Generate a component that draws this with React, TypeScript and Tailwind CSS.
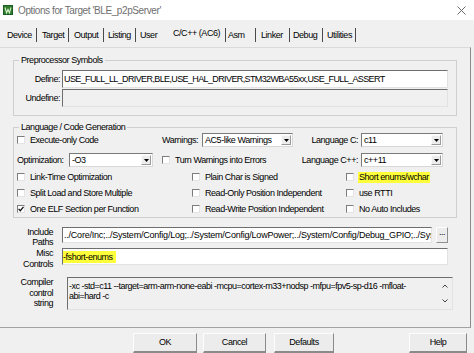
import React from "react";

function Check({ checked }: { checked?: boolean }) {
  return (
    <span className="flex h-[8px] w-[8px] shrink-0 items-center justify-center border border-t-[#7d7d7d] border-l-[#7d7d7d] border-r-[#e4e4e4] border-b-[#e4e4e4] bg-white">
      {checked && (
        <svg width="6" height="6" viewBox="0 0 6 6">
          <path d="M0.6 2.9 L2.3 4.7 L5.5 0.9" fill="none" stroke="#111" strokeWidth="1.3" />
        </svg>
      )}
    </span>
  );
}

function CheckRow({ label, checked, hl }: { label: string; checked?: boolean; hl?: boolean }) {
  return (
    <div className="flex h-[16px] items-center gap-[5px]">
      <Check checked={checked} />
      <span className={hl ? "whitespace-nowrap bg-[#ffff3a] px-[1px] -ml-[1px]" : "whitespace-nowrap"}>{label}</span>
    </div>
  );
}

function Select({ value, cls }: { value: string; cls: string }) {
  return (
    <div className={`flex items-stretch border border-t-[#7a7a7a] border-l-[#7a7a7a] border-r-[#d8d8d8] border-b-[#d8d8d8] bg-white ${cls}`}>
      <span className="flex flex-1 items-center overflow-hidden whitespace-nowrap pl-[2px]">{value}</span>
      <span className="my-[1px] mr-[1px] flex w-[10px] items-center justify-center border border-t-[#fafafa] border-l-[#fafafa] border-r-[#9a9a9a] border-b-[#9a9a9a] bg-[#ececec]">
        <svg width="5" height="3" viewBox="0 0 5 3">
          <path d="M0 0 H5 L2.5 3 Z" fill="#000" />
        </svg>
      </span>
    </div>
  );
}

const tabs = [
  { label: "Device", cls: "ml-[7px] w-[29px]", sep: true },
  { label: "Target", cls: "ml-[5px] w-[26px]", sep: true },
  { label: "Output", cls: "ml-[5px] w-[29px]", sep: true },
  { label: "Listing", cls: "ml-[4px] w-[27px]", sep: true },
  { label: "User", cls: "ml-[4px] w-[33px]", sep: false },
  { label: "C/C++ (AC6)", cls: "ml-0 w-[52px] pb-[4px]", sep: true },
  { label: "Asm", cls: "ml-[2px] w-[27px]", sep: true },
  { label: "Linker", cls: "ml-[5px] w-[28px]", sep: true },
  { label: "Debug", cls: "ml-[3px] w-[29px]", sep: true },
  { label: "Utilities", cls: "ml-[4px] w-[28px]", sep: true },
];

const sunken =
  "border border-t-[#6e6e6e] border-l-[#6e6e6e] border-r-[#e2e2e2] border-b-[#e2e2e2]";

const btn =
  "flex h-[20px] items-center justify-center border border-t-[#fdfdfd] border-l-[#fdfdfd] border-r-[#8a8a8a] border-b-[2px] border-b-[#8a8a8a] bg-[#ececec]";

export default function App() {
  return (
    <div className="h-[353px] w-[474px] overflow-hidden bg-[#f0f0f0] font-['Liberation_Sans',Arial,sans-serif] text-[9px] leading-[11px] tracking-[-0.45px] text-black">
      {/* Title bar */}
      <div className="flex h-[20px] items-center bg-white">
        <svg className="ml-[3px]" width="10" height="10" viewBox="0 0 10 10">
          <rect x="0" y="0" width="10" height="10" fill="#2f7d32" />
          <rect x="0.5" y="0.5" width="9" height="9" fill="none" stroke="#1b5e20" />
          <path d="M2 2.5 L3.6 7.8 L5 4.5 L6.4 7.8 L8 2.5" fill="none" stroke="#d7f0c8" strokeWidth="1.1" />
        </svg>
        <span className="ml-[5px] text-[10px] tracking-[-0.4px] text-[#6f6f6f]">Options for Target 'BLE_p2pServer'</span>
        <svg className="ml-auto mr-[8px]" width="9" height="9" viewBox="0 0 9 9">
          <path d="M0.5 0.5 L8.5 8.5 M8.5 0.5 L0.5 8.5" stroke="#6a6a6a" strokeWidth="1" />
        </svg>
      </div>

      {/* Tabs */}
      <div className="flex h-[27px] items-center pt-[3px]">
        {tabs.map((t) => (
          <React.Fragment key={t.label}>
            <span className={`whitespace-nowrap ${t.cls}`}>{t.label}</span>
            {t.sep && <span className="h-[14px] w-[1px] bg-[#4a4a4a]" />}
          </React.Fragment>
        ))}
      </div>

      {/* Pane */}
      <div className="flex h-[281px] w-[471px] flex-col border-t border-b border-r border-t-[#dadada] border-b-[#a3a3a3] border-r-[#8c8c8c]">
        <fieldset className="ml-[13px] mt-[6px] w-[444px] border border-[#cfcfcf] pb-[8px]">
          <legend className="ml-[5px] px-[2px] leading-[12px]">Preprocessor Symbols</legend>
          <div className="mt-[4px] flex h-[18px] items-center">
            <span className="w-[46px] text-right">Define:</span>
            <div className={`ml-[2px] flex h-[18px] w-[386px] items-center overflow-hidden whitespace-nowrap bg-white pl-[1px] tracking-[-0.62px] ${sunken}`}>
              USE_FULL_LL_DRIVER,BLE,USE_HAL_DRIVER,STM32WBA55xx,USE_FULL_ASSERT
            </div>
          </div>
          <div className="mt-[1px] flex h-[18px] items-center">
            <span className="w-[46px] text-right">Undefine:</span>
            <div className={`ml-[2px] h-[18px] w-[386px] bg-[#f0f0f0] ${sunken}`} />
          </div>
        </fieldset>

        <fieldset className="ml-[13px] mt-[5px] w-[444px] border border-[#cfcfcf]">
          <legend className="ml-[5px] px-[2px] leading-[12px]">Language / Code Generation</legend>
          <div className="flex h-[14px] items-center">
            <div className="ml-[3px] flex w-[145px] items-center gap-[5px]">
              <Check />
              <span className="whitespace-nowrap">Execute-only Code</span>
            </div>
            <div className="flex w-[134px] items-center">
              <span className="w-[40px] whitespace-nowrap">Warnings:</span>
              <Select value="AC5-like Warnings" cls="h-[14px] w-[91px]" />
            </div>
            <div className="flex items-center">
              <span className="w-[62px] whitespace-nowrap text-right">Language C:</span>
              <Select value="c11" cls="ml-[3px] h-[14px] w-[82px]" />
            </div>
          </div>
          <div className="mt-[6px] flex h-[14px] items-center">
            <div className="ml-[3px] flex w-[145px] items-center">
              <span className="w-[52px] whitespace-nowrap">Optimization:</span>
              <Select value="-O3" cls="h-[14px] w-[84px]" />
            </div>
            <div className="flex w-[134px] items-center gap-[5px]">
              <Check />
              <span className="whitespace-nowrap">Turn Warnings into Errors</span>
            </div>
            <div className="flex items-center">
              <span className="w-[62px] whitespace-nowrap text-right">Language C++:</span>
              <Select value="c++11" cls="ml-[3px] h-[14px] w-[82px]" />
            </div>
          </div>
          <div className="ml-[3px] mt-[2px] grid grid-cols-[175px_154px_100px]">
            <CheckRow label="Link-Time Optimization" />
            <CheckRow label="Plain Char is Signed" />
            <CheckRow label="Short enums/wchar" hl />
            <CheckRow label="Split Load and Store Multiple" />
            <CheckRow label="Read-Only Position Independent" />
            <CheckRow label="use RTTI" />
            <CheckRow label="One ELF Section per Function" checked />
            <CheckRow label="Read-Write Position Independent" />
            <CheckRow label="No Auto Includes" />
          </div>
        </fieldset>

        {/* Include Paths */}
        <div className="mt-[9px] flex h-[20px]">
          <div className="w-[53px] text-right leading-[10px]">
            Include
            <br />
            Paths
          </div>
          <div className={`ml-[9px] flex h-[16px] w-[370px] items-center overflow-hidden whitespace-nowrap bg-white pl-[1px] tracking-[-0.22px] ${sunken}`}>
            ../Core/Inc;../System/Config/Log;../System/Config/LowPower;../System/Config/Debug_GPIO;../Sys
          </div>
          <div className="ml-[4px] flex h-[16px] w-[12px] items-start justify-center border border-t-[#fdfdfd] border-l-[#fdfdfd] border-r-[#8f8f8f] border-b-[#8f8f8f] bg-[#ececec] leading-[8px]">
            ...
          </div>
        </div>

        {/* Misc Controls */}
        <div className="flex h-[22px]">
          <div className="w-[53px] pt-[0.5px] text-right leading-[11px]">
            Misc
            <br />
            Controls
          </div>
          <div className={`ml-[9px] mt-[1px] flex h-[17px] w-[386px] items-center overflow-hidden whitespace-nowrap bg-white ${sunken}`}>
            <span className="bg-[#ffff3a] pr-[3px] leading-[12px]">-fshort-enums</span>
          </div>
        </div>

        {/* Compiler control string */}
        <div className="mt-[8px] flex h-[33px]">
          <div className="w-[53px] text-right leading-[10.5px]">
            Compiler
            <br />
            control
            <br />
            string
          </div>
          <div className={`ml-[14px] flex h-[33px] w-[386px] bg-[#f0f0f0] ${sunken}`}>
            <div className="flex-1 pl-[1px] pt-[3px] leading-[10px] tracking-[-0.5px]">
              <div className="whitespace-nowrap">-xc -std=c11 --target=arm-arm-none-eabi -mcpu=cortex-m33+nodsp -mfpu=fpv5-sp-d16 -mfloat-</div>
              <div className="whitespace-nowrap">abi=hard -c</div>
            </div>
            <div className="flex w-[14px] flex-col items-center justify-between pb-[6px] pt-[6px]">
              <svg width="6" height="4" viewBox="0 0 6 4">
                <path d="M0.5 3.5 L3 1 L5.5 3.5" fill="none" stroke="#444" strokeWidth="1" />
              </svg>
              <svg width="6" height="4" viewBox="0 0 6 4">
                <path d="M0.5 0.5 L3 3 L5.5 0.5" fill="none" stroke="#444" strokeWidth="1" />
              </svg>
            </div>
          </div>
        </div>
      </div>

      {/* Buttons */}
      <div className="mt-[5px] flex h-[20px]">
        <button className={`ml-[133px] w-[64px] ${btn}`}>OK</button>
        <button className={`ml-[6px] w-[63px] ${btn}`}>Cancel</button>
        <button className={`ml-[8px] w-[60px] ${btn}`}>Defaults</button>
        <button className={`ml-[75px] w-[58px] ${btn}`}>Help</button>
      </div>
    </div>
  );
}
